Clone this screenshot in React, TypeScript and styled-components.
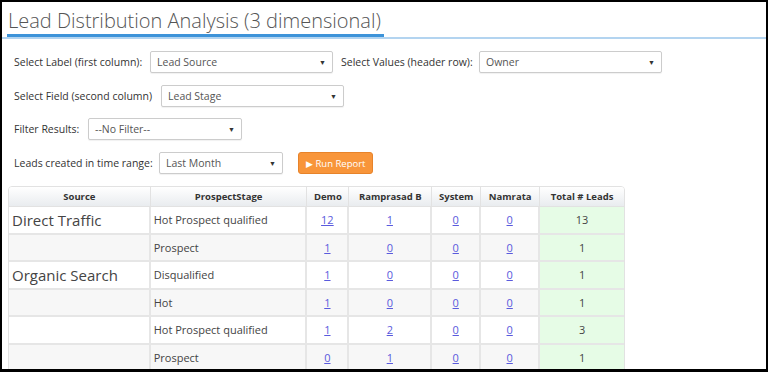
import React from "react";
import styled, { createGlobalStyle } from "styled-components";

const Global = createGlobalStyle`
  html, body { margin: 0; padding: 0; background: #000; }
  body { font-family: "Open Sans", "Noto Sans", sans-serif; }
  * { box-sizing: border-box; }
`;

const Frame = styled.div`
  width: 768px;
  height: 372px;
  border-style: solid;
  border-color: #000;
  border-width: 2px 2px 3px 2px;
  background: #fff;
  overflow: hidden;
`;

const Header = styled.div`
  padding: 0 0 0 5px;
  border-bottom: 2px solid #b3d4f0;
  height: 37px;
`;

const Title = styled.h1`
  display: inline-block;
  margin: 0;
  padding: 6px 3px 0 1px;
  font-weight: 300;
  font-size: 20px;
  line-height: 26px;
  color: #555;
  border-bottom: 3px solid #3d93d9;
`;

const Form = styled.div`
  display: flex;
  flex-direction: column;
  gap: 11.7px;
  padding: 12px 0 0 12px;
`;

const FormRow = styled.div`
  display: flex;
  align-items: center;
  height: 22px;
`;

const Label = styled.span<{ $w: number }>`
  width: ${(p) => p.$w}px;
  font-size: 10.5px;
  color: #333;
  white-space: nowrap;
`;

const SelectBox = styled.div<{ $w: number }>`
  position: relative;
  width: ${(p) => p.$w}px;
  height: 22px;
  border: 1px solid #ccc;
  border-radius: 2px;
  box-shadow: 0 1px 1px rgba(0, 0, 0, 0.06);
  background: #fff;
  font-size: 10.5px;
  color: #555;
  padding: 0 0 0 6px;
  display: flex;
  align-items: center;
  margin-right: 8px;
`;

const Arrow = styled.span`
  position: absolute;
  right: 6px;
  top: 6px;
  font-size: 7px;
  color: #333;
`;

const RunButton = styled.button`
  margin-left: 7px;
  width: 75px;
  height: 22px;
  border: 1px solid #e7832a;
  border-radius: 3px;
  background: #f8953a;
  color: #fff;
  font-family: inherit;
  font-size: 9.5px;
  display: flex;
  align-items: center;
  justify-content: center;
  gap: 3px;
  padding: 0;
`;

const Play = styled.span`
  font-size: 9px;
  line-height: 1;
`;

const TableWrap = styled.div`
  padding: 12px 0 0 6px;
`;

const Table = styled.table`
  border-collapse: separate;
  border-spacing: 0;
  width: 617px;
  font-family: "Open Sans", "Noto Sans", sans-serif;
  border: 1px solid #e2e2e2;
  border-radius: 4px 4px 0 0;
  overflow: hidden;
`;

const Th = styled.th<{ $w: number }>`
  width: ${(p) => p.$w}px;
  height: 20px;
  font-size: 9.5px;
  font-weight: 700;
  color: #333;
  background: linear-gradient(#ffffff, #e9ecef);
  border-right: 1px solid #e2e2e2;
  border-bottom: 1px solid #e2e2e2;
  padding: 0;
  &:last-child { border-right: none; }
`;

const Tr = styled.tr<{ $alt: boolean }>`
  background: ${(p) => (p.$alt ? "#f7f7f7" : "#fff")};
`;

const Td = styled.td<{ $big?: boolean; $center?: boolean; $total?: boolean }>`
  height: 27.5px;
  padding: 0 0 0 ${(p) => (p.$center ? 0 : 3)}px;
  font-size: ${(p) => (p.$big ? 15 : 11)}px;
  color: #444;
  text-align: ${(p) => (p.$center ? "center" : "left")};
  border-right: 2px solid #e6e6e6;
  border-bottom: 2px solid #e6e6e6;
  background: ${(p) => (p.$total ? "#e6fce6" : "transparent")};
  &:last-child { border-right: none; }
`;

const Link = styled.a`
  color: #5a5add;
  text-decoration: underline;
  font-size: 11px;
`;

const widths = [142, 157, 42, 83, 49, 59, 84];
const heads = ["Source", "ProspectStage", "Demo", "Ramprasad B", "System", "Namrata", "Total # Leads"];

const rows: [string, string, number[], number][] = [
  ["Direct Traffic", "Hot Prospect qualified", [12, 1, 0, 0], 13],
  ["", "Prospect", [1, 0, 0, 0], 1],
  ["Organic Search", "Disqualified", [1, 0, 0, 0], 1],
  ["", "Hot", [1, 0, 0, 0], 1],
  ["", "Hot Prospect qualified", [1, 2, 0, 0], 3],
  ["", "Prospect", [0, 1, 0, 0], 1],
];

function Select({ w, value }: { w: number; value: string }) {
  return (
    <SelectBox $w={w}>
      {value}
      <Arrow>▼</Arrow>
    </SelectBox>
  );
}

export default function App() {
  return (
    <>
      <Global />
      <Frame>
        <Header>
          <Title>Lead Distribution Analysis (3 dimensional)</Title>
        </Header>
        <Form>
          <FormRow>
            <Label $w={136}>Select Label (first column):</Label>
            <Select w={183} value="Lead Source" />
            <Label $w={138}>Select Values (header row):</Label>
            <Select w={183} value="Owner" />
          </FormRow>
          <FormRow>
            <Label $w={147}>Select Field (second column)</Label>
            <Select w={183} value="Lead Stage" />
          </FormRow>
          <FormRow>
            <Label $w={74}>Filter Results:</Label>
            <Select w={154} value="--No Filter--" />
          </FormRow>
          <FormRow>
            <Label $w={145}>Leads created in time range:</Label>
            <Select w={124} value="Last Month" />
            <RunButton>
              <Play>▶</Play> Run Report
            </RunButton>
          </FormRow>
        </Form>
        <TableWrap>
          <Table>
            <thead>
              <tr>
                {heads.map((h, i) => (
                  <Th key={h} $w={widths[i]}>
                    {h}
                  </Th>
                ))}
              </tr>
            </thead>
            <tbody>
              {rows.map((r, i) => (
                <Tr key={i} $alt={i % 2 === 1}>
                  <Td $big>{r[0]}</Td>
                  <Td>{r[1]}</Td>
                  {r[2].map((n, j) => (
                    <Td key={j} $center>
                      <Link href="#">{n}</Link>
                    </Td>
                  ))}
                  <Td $center $total>
                    {r[3]}
                  </Td>
                </Tr>
              ))}
            </tbody>
          </Table>
        </TableWrap>
      </Frame>
    </>
  );
}
